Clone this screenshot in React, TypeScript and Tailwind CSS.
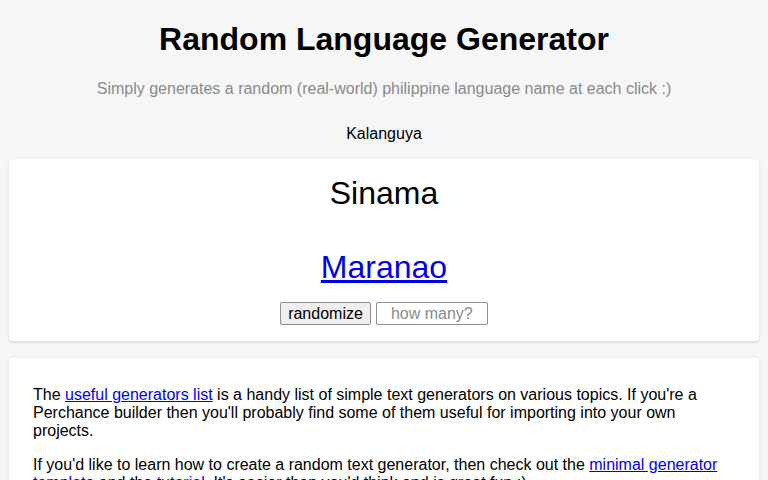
import { useState } from 'react';

const LANGS = ['Sinama', 'Maranao', 'Kalanguya', 'Tagalog', 'Cebuano', 'Ilocano', 'Hiligaynon', 'Waray', 'Kapampangan', 'Bikol', 'Pangasinan', 'Tausug', 'Ivatan'];

export default function App() {
  const [top, setTop] = useState('Sinama');
  const [main, setMain] = useState('Maranao');

  const randomize = () => {
    setTop(LANGS[Math.floor(Math.random() * LANGS.length)]);
    setMain(LANGS[Math.floor(Math.random() * LANGS.length)]);
  };

  return (
    <div className="min-h-[480px] bg-[#f6f6f6] font-['Liberation_Sans',Arial,sans-serif] text-black pt-[21px]">
      <h1 className="text-center text-[32px] font-bold leading-[37px]">Random Language Generator</h1>
      <p className="text-center text-[16px] leading-[18px] text-[#8a8a8a] mt-[22px]">
        Simply generates a random (real-world) philippine language name at each click :)
      </p>
      <p className="text-center text-[16px] leading-[18px] mt-[27px]">Kalanguya</p>

      <div className="mx-[9px] mt-[16px] bg-white rounded-[3px] shadow-[0_1px_3px_rgba(0,0,0,0.15)] pt-[16px] pb-[16px] text-center">
        <div className="text-[32px] leading-[37px]">{top}</div>
        <div className="h-[37px]" />
        <div className="text-[32px] leading-[37px]">
          <a href="#" className="text-[#0000ee] underline">{main}</a>
        </div>
        <div className="mt-[16px] flex justify-center gap-[5px]">
          <button
            onClick={randomize}
            className="h-[23px] px-[7px] text-[16px] leading-[18px] bg-[#efefef] border border-[#8f8f8f] rounded-[2px]"
          >
            randomize
          </button>
          <input
            placeholder="how many?"
            className="h-[23px] w-[112px] text-center text-[16px] border border-[#8f8f8f] rounded-[2px] placeholder:text-[#8a8a8a] bg-white"
          />
        </div>
      </div>

      <div className="mx-[9px] mt-[17px] bg-white rounded-[3px] shadow-[0_1px_3px_rgba(0,0,0,0.15)] px-[24px] pt-[28px] pb-[24px] text-[16px] leading-[18px]">
        <p>
          The <a href="#" className="text-[#0000ee] underline">useful generators list</a> is a handy list of simple text generators on various topics. If you're a Perchance builder then you'll probably find some of them useful for importing into your own projects.
        </p>
        <p className="mt-[16px]">
          If you'd like to learn how to create a random text generator, then check out the <a href="#" className="text-[#0000ee] underline">minimal generator template</a> and the <a href="#" className="text-[#0000ee] underline">tutorial</a>. It's easier than you'd think and is great fun :)
        </p>
      </div>
    </div>
  );
}
